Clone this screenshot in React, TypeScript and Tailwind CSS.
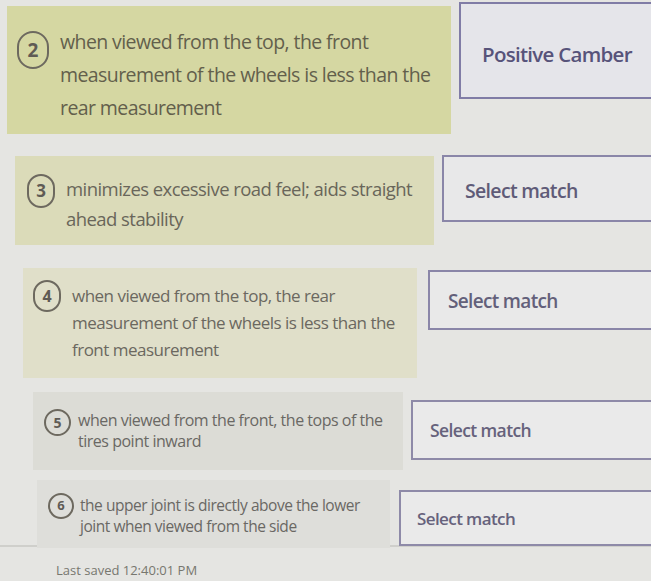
import React from 'react';

type Row = {
  n: number;
  lines: string[];
  match: string;
  row: string;
  panel: string;
  circle: string;
  text: string;
  select: string;
  label: string;
};

const ROWS: Row[] = [
  {
    n: 2,
    lines: ['when viewed from the top, the front', 'measurement of the wheels is less than the', 'rear measurement'],
    match: 'Positive Camber',
    row: 'mt-[2px]',
    panel: 'ml-[7px] mt-[4px] w-[444px] h-[128px] pl-[10px] pt-[19px] bg-[#d5d7a2]',
    circle: 'w-[32px] h-[38px] mt-[6px] text-[19px] border-[2.5px]',
    text: 'ml-[11px] text-[19.5px] leading-[33px] text-[#635f4c]',
    select: 'ml-[8px] h-[97px] pl-[21px] pt-[8px] bg-[#e5e5ea] border-[#807ca6]',
    label: 'text-[20.5px] text-[#57537a]',
  },
  {
    n: 3,
    lines: ['minimizes excessive road feel; aids straight', 'ahead stability'],
    match: 'Select match',
    row: 'mt-[21px]',
    panel: 'ml-[15px] mt-[1px] w-[419px] h-[89px] pl-[12px] pt-[18px] bg-[#dbdbb9]',
    circle: 'w-[28px] h-[34px] mt-0 text-[17px] border-[2.5px]',
    text: 'ml-[11px] text-[18.5px] leading-[30px] text-[#69665a]',
    select: 'ml-[8px] h-[67px] pl-[21px] pt-[5px] bg-[#e8e8e9] border-[#8a86a8]',
    label: 'text-[19.5px] text-[#5f5b78]',
  },
  {
    n: 4,
    lines: ['when viewed from the top, the rear', 'measurement of the wheels is less than the', 'front measurement'],
    match: 'Select match',
    row: 'mt-[23px]',
    panel: 'ml-[23px] mt-0 w-[394px] h-[110px] pl-[10px] pt-[12px] bg-[#e0dfc9]',
    circle: 'w-[28px] h-[32px] mt-0 text-[16px] border-[2px]',
    text: 'ml-[11px] mt-[2px] text-[17px] leading-[27px] text-[#6b6860]',
    select: 'ml-[11px] mt-[2px] h-[60px] pl-[18px] pt-[2px] bg-[#e9e9e9] border-[#8a86a8]',
    label: 'text-[19px] text-[#63607a]',
  },
  {
    n: 5,
    lines: ['when viewed from the front, the tops of the', 'tires point inward'],
    match: 'Select match',
    row: 'mt-[14px]',
    panel: 'ml-[33px] mt-0 w-[370px] h-[78px] pl-[11px] pt-[17px] bg-[#dcdcd6]',
    circle: 'w-[27px] h-[27px] mt-0 text-[14px] border-[2px]',
    text: 'ml-[7px] mt-[1px] text-[16px] leading-[21px] text-[#6a6864]',
    select: 'ml-[8px] mt-[8px] h-[60px] pl-[17px] pt-[1px] bg-[#eaeaea] border-[#8e8aa8]',
    label: 'text-[17.5px] text-[#66627c]',
  },
  {
    n: 6,
    lines: ['the upper joint is directly above the lower', 'joint when viewed from the side'],
    match: 'Select match',
    row: 'mt-[10px]',
    panel: 'ml-[37px] mt-0 w-[353px] h-[68px] pl-[11px] pt-[13px] bg-[#dededa]',
    circle: 'w-[26px] h-[26px] mt-0 text-[13px] border-[2px]',
    text: 'ml-[6px] mt-[2px] text-[15.5px] leading-[21px] text-[#6a6864]',
    select: 'ml-[9px] mt-[10px] h-[56px] pl-[16px] pt-[1px] bg-[#eaeaea] border-[#8e8aa8]',
    label: 'text-[17px] text-[#66627c]',
  },
];

function MatchRow({ r }: { r: Row }) {
  return (
    <div className={`flex items-start ${r.row}`}>
      <div className={`flex shrink-0 items-start ${r.panel}`}>
        <div
          className={`flex shrink-0 items-center justify-center rounded-full border-[#6d695f] font-bold text-[#5f5b55] ${r.circle}`}
        >
          {r.n}
        </div>
        <p className={`whitespace-nowrap tracking-[-0.03em] ${r.text}`}>
          {r.lines.map((l, i) => (
            <React.Fragment key={i}>
              {i > 0 && <br />}
              {l}
            </React.Fragment>
          ))}
        </p>
      </div>
      <div className={`flex min-w-0 flex-1 items-center border-y-2 border-l-2 ${r.select}`}>
        <span className={`font-semibold tracking-[-0.035em] whitespace-nowrap ${r.label}`}>{r.match}</span>
      </div>
    </div>
  );
}

export default function App() {
  return (
    <div className="h-[581px] w-[651px] overflow-hidden bg-[#e5e5e2] font-['Open_Sans',sans-serif]">
      {ROWS.map((r) => (
        <MatchRow key={r.n} r={r} />
      ))}
      <div className="mt-[-3px] h-[2px] bg-[#cfcfcb]" />
      <p className="ml-[56px] mt-[14px] text-[13px] text-[#77776f]">Last saved 12:40:01 PM</p>
    </div>
  );
}
